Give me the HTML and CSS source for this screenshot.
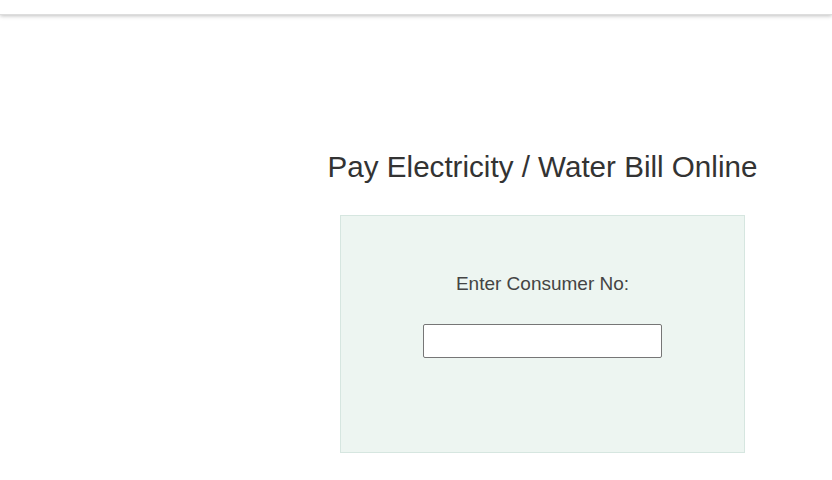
FILE: index.html
```html
<!DOCTYPE html>
<html>
<head>
    <meta charset="UTF-8">
    <title>Pay Electricity / Water Bill Online</title>
    <link rel="stylesheet" href="styles.css">
</head>
<body>
    <div class="topbar"></div>
    <div class="page">
        <div class="sidebar"></div>
        <div class="content">
            <h1 class="title">Pay Electricity / Water Bill Online</h1>
            <div class="bill-box">
                <label for="consumerNo">Enter Consumer No:</label>
                <input type="text" id="consumerNo">
            </div>
        </div>
    </div>
</body>
</html>
```

FILE: styles.css
```css
body {
    margin: 0;
    background-color: #fff;
    font-family: Arial, "Liberation Sans", sans-serif;
    color: #333;
}
.topbar {
    height: 14px;
    background-color: #fff;
    box-shadow: 0 1px 4px rgba(0,0,0,0.25);
    border-bottom: 1px solid #ddd;
}
.page {
    display: flex;
}
.sidebar {
    width: 253px;
}
.content {
    flex: 1;
    display: flex;
    flex-direction: column;
    align-items: center;
    padding-top: 134px;
}
.title {
    margin: 0;
    font-size: 29.6px;
    font-weight: normal;
    line-height: 36px;
}
.bill-box {
    margin-top: 30px;
    width: 405px;
    height: 238px;
    background-color: #edf5f1;
    border: 1px solid #d6e6e0;
    display: flex;
    flex-direction: column;
    align-items: center;
    padding-top: 57px;
    box-sizing: border-box;
}
.bill-box label {
    font-size: 19px;
    line-height: 22px;
    color: #444;
}
.bill-box input {
    margin-top: 29px;
    width: 239px;
    height: 34px;
    box-sizing: border-box;
    border: 1px solid #767676;
    border-radius: 2px;
    background-color: #fff;
}
```
